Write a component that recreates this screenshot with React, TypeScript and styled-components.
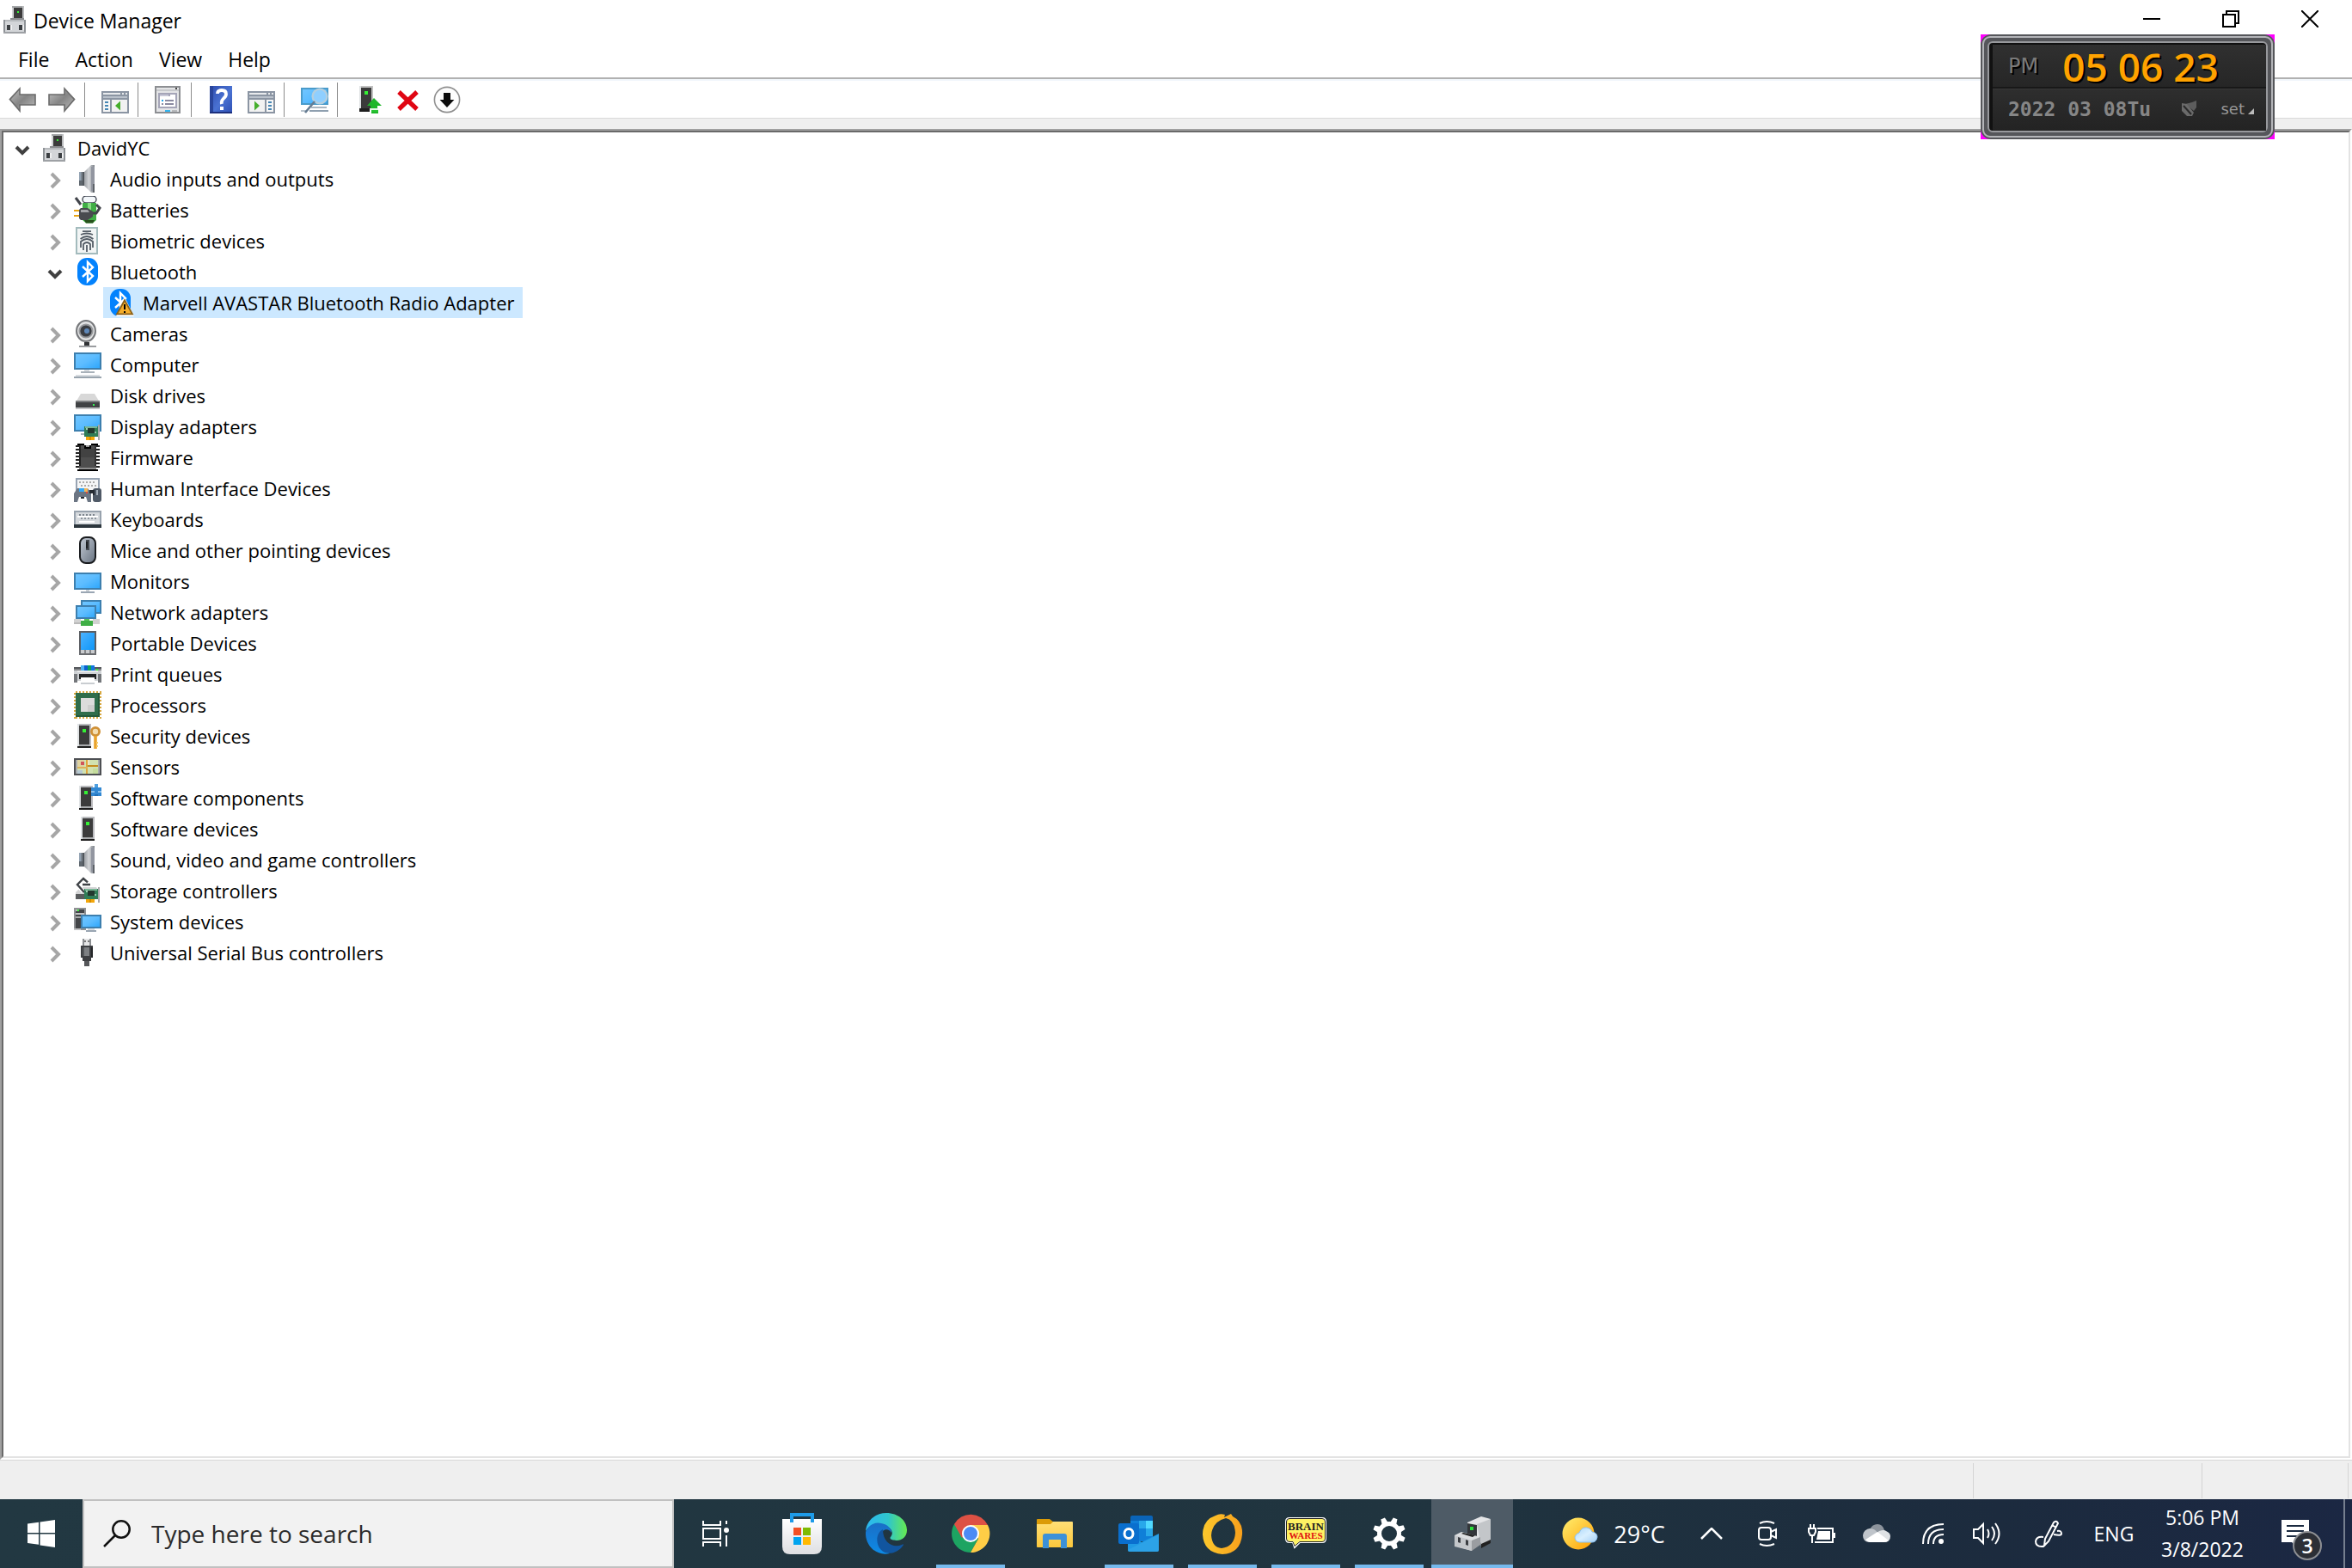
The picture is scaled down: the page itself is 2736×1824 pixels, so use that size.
import React from "react";
import styled, { createGlobalStyle } from "styled-components";

const GlobalStyle = createGlobalStyle`
  * { box-sizing: border-box; }
  body { margin: 0; background: #fff; }
  body, button, input { font-family: "Open Sans", "Noto Sans", sans-serif; }
  button { border: 0; padding: 0; background: none; color: inherit; }
`;

const Screen = styled.div`
  display: flex;
  flex-direction: column;
  min-height: 100vh;
  color: #000;
  font-size: 22px;
`;

/* ---------- window chrome ---------- */

const TitleBar = styled.header`
  display: flex;
  align-items: center;
  height: 46px;
  padding: 0 3px 0 2px;
`;

const WindowTitle = styled.h1`
  flex: 1;
  margin: 0 0 0 5px;
  padding-top: 2px;
  font-size: 23px;
  font-weight: 400;
  line-height: 44px;
`;

const CaptionButton = styled.button`
  display: grid;
  place-items: center;
  width: 92px;
  height: 44px;
  align-self: flex-start;
`;

const MenuBar = styled.nav`
  display: flex;
  height: 46px;
  padding-left: 6px;
  border-bottom: 2px solid #b1b1b1;
`;

const MenuItem = styled.button`
  padding: 2px 15px 0;
  font-size: 23px;
  line-height: 42px;
`;

const ToolBar = styled.div`
  display: flex;
  align-items: center;
  height: 46px;
  padding: 0 3px;
  border-top: 2px solid #f1f6fb;
  border-bottom: 1px solid #dadada;
`;

const ToolButton = styled.button`
  display: grid;
  place-items: center;
  width: 46px;
  height: 40px;
`;

const ToolSeparator = styled.span`
  width: 1px;
  height: 40px;
  margin: 0 12px 0 3px;
  background: #8c8c8c;
`;

const Main = styled.main`
  display: flex;
  flex: 1;
  padding-top: 12px;
  background: #efefef;
`;

const TreePane = styled.div`
  flex: 1;
  border: 2px solid #a0a0a0;
  border-right-color: #fff;
  border-bottom-color: #fff;
`;

const TreeInner = styled.div`
  height: 100%;
  background: #fff;
  border: 2px solid #696969;
  border-right-color: #e3e3e3;
  border-bottom-color: #e3e3e3;
`;

const TreeList = styled.ul`
  margin: 0;
  padding: 0;
  list-style: none;
`;

const TreeRow = styled.li<{ $level: number }>`
  display: flex;
  align-items: center;
  height: 36px;
  padding-left: ${(p) => 4 + p.$level * 38}px;
`;

const Toggle = styled.button`
  display: grid;
  place-items: center;
  width: 36px;
  height: 36px;
`;

const RowLabel = styled.span<{ $selected?: boolean }>`
  display: flex;
  align-items: center;
  gap: 10px;
  height: 36px;
  padding: 0 10px 0 4px;
  white-space: nowrap;
  background: ${(p) => (p.$selected ? "#cce8ff" : "transparent")};
`;

const RowText = styled.span`
  line-height: 36px;
`;

const StatusBar = styled.footer`
  display: flex;
  justify-content: flex-end;
  height: 46px;
  padding: 3px 4px 1px 0;
  border-top: 1px solid #d7d7d7;
  background: #efefef;
`;

const StatusCell = styled.span<{ $width: number }>`
  width: ${(p) => p.$width}px;
  border-right: 1px solid #d4d4d4;
`;

/* ---------- task bar ---------- */

const TaskBar = styled.nav`
  display: flex;
  height: 80px;
  color: #fff;
  background: linear-gradient(90deg, #223842 0%, #20343f 60%, #1c2b3e 85%, #1b2743 100%);
`;

const StartButton = styled.button`
  display: grid;
  place-items: center;
  width: 96px;
`;

const SearchBox = styled.label`
  display: flex;
  align-items: center;
  gap: 24px;
  width: 688px;
  padding-left: 22px;
  border: 2px solid #c1c1c1;
  background: #f2f2f2;
`;

const SearchInput = styled.input`
  flex: 1;
  min-width: 0;
  padding: 0;
  border: 0;
  outline: 0;
  background: transparent;
  font-size: 28px;
  line-height: 40px;
  &::placeholder { color: #2b2b2b; opacity: 1; }
`;

const AppStrip = styled.div`
  display: flex;
  padding-left: 2px;
`;

const AppButton = styled.button<{ $wide?: boolean }>`
  display: flex;
  flex-direction: column;
  align-items: center;
  justify-content: space-between;
  width: ${(p) => (p.$wide ? 98 : 97)}px;
  height: 80px;
`;

const AppFace = styled.span<{ $active?: boolean }>`
  display: grid;
  place-items: center;
  width: 95px;
  height: 76px;
  padding-top: 4px;
  background: ${(p) => (p.$active ? "#4e5b66" : "transparent")};
`;

const RunningMark = styled.span<{ $active?: boolean }>`
  width: ${(p) => (p.$active ? 95 : 80)}px;
  height: 4px;
  background: #76b9ed;
`;

const Tray = styled.div`
  display: flex;
  align-items: center;
  margin-left: auto;
`;

const TrayButton = styled.button<{ $width: number }>`
  display: flex;
  align-items: center;
  justify-content: center;
  gap: 18px;
  width: ${(p) => p.$width}px;
  height: 80px;
  font-size: 23px;
`;

const Temperature = styled.span`
  font-size: 27px;
`;

const TrayClock = styled.button`
  width: 140px;
  font-size: 23px;
  line-height: 37px;
  text-align: center;
`;

const ClockLine = styled.span`
  display: block;
`;

const NoticeButton = styled.button`
  position: relative;
  display: grid;
  place-items: center;
  width: 76px;
  height: 80px;
  margin-right: 18px;
`;

const NoticeCount = styled.span`
  position: absolute;
  top: 37px;
  left: 35px;
  width: 34px;
  height: 34px;
  border: 2px solid #8d8f93;
  border-radius: 50%;
  background: #2c2f36;
  font-size: 23px;
  font-weight: 600;
  line-height: 30px;
  text-align: center;
`;

const ShowDesktop = styled.button`
  width: 10px;
  height: 80px;
  border-left: 2px solid #76808f;
`;

/* ---------- floating clock ---------- */

const ClockWidget = styled.aside`
  position: fixed;
  top: 40px;
  right: 90px;
  width: 342px;
  height: 122px;
  background: #f0f;
`;

const ClockFrame = styled.div`
  height: 100%;
  padding: 2px;
  border-radius: 12px;
  background: #55565a;
`;

const ClockRim = styled.div`
  height: 100%;
  border: 2px solid #b4b5b9;
  border-radius: 9px;
  padding: 4px;
`;

const ClockFace = styled.div`
  display: flex;
  flex-direction: column;
  height: 100%;
  padding: 2px 0 0 4px;
  border: 2px solid #98999d;
  border-radius: 6px;
  background: #111;
`;

const ClockTime = styled.div`
  display: flex;
  align-items: center;
  flex: 1;
  gap: 28px;
  padding: 2px 18px 0;
  border-bottom: 2px solid #181818;
  background: linear-gradient(#303030, #262626);
`;

const Meridiem = styled.span`
  color: #7a7a7a;
  font: 400 24px/30px "DejaVu Sans", sans-serif;
  text-shadow: 2px 2px 0 #000;
`;

const Digits = styled.span`
  color: #ffa200;
  font-size: 46px;
  font-weight: 600;
  line-height: 46px;
  white-space: pre;
  text-shadow: 2px 2px 0 #000;
`;

const ClockDate = styled.div`
  display: flex;
  align-items: center;
  flex: 1;
  padding: 0 14px 2px 18px;
  border-top: 1px solid #383838;
  color: #868686;
  background: linear-gradient(#2e2e2e, #232323);
  font: 700 23px/30px "DejaVu Sans Mono", monospace;
  white-space: pre;
`;

const SetButton = styled.button`
  display: flex;
  align-items: center;
  gap: 4px;
  margin-left: auto;
  color: #979797;
  font: 400 18px/24px "DejaVu Sans", sans-serif;
`;

const SetArrow = styled.svg`
  margin-top: 6px;
`;

const Satellite = styled.svg`
  margin-left: 34px;
`;

/* ---------- drawings ---------- */

/* Each cell is "x,y,w,h,colour" on a 16 unit grid. */
const Cells = ({ d }: { d: string }) => (
  <g shapeRendering="crispEdges">
    {d.trim().split(/\s+/).map((c, i) => {
      const [x, y, w, h, f] = c.split(",");
      return <rect key={i} x={x} y={y} width={w} height={h} fill={"#" + f} />;
    })}
  </g>
);

const Svg16 = ({ children }: { children: React.ReactNode }) => (
  <svg width="32" height="32" viewBox="0 0 16 16" fill="none" aria-hidden="true">{children}</svg>
);

const DefsHolder = styled.svg`
  position: absolute;
`;

const Defs = () => (
  <DefsHolder width="0" height="0" aria-hidden="true">
    <defs>
      <linearGradient id="sky" x1="0" y1="0" x2="1" y2="1">
        <stop offset="0" stopColor="#72c6ff" /><stop offset=".5" stopColor="#5cbcff" /><stop offset="1" stopColor="#2ba5fb" />
      </linearGradient>
      <linearGradient id="deepSky" x1="0" y1="0" x2="1" y2="1"><stop offset="0" stopColor="#4fb4ff" /><stop offset="1" stopColor="#0b95f8" /></linearGradient>
      <linearGradient id="cone"><stop offset="0" stopColor="#9b9fa4" /><stop offset=".45" stopColor="#d3d5d8" /><stop offset="1" stopColor="#7d8289" /></linearGradient>
      <linearGradient id="mouse" x1="0" y1="0" x2="1" y2="1"><stop offset="0" stopColor="#c5ccd6" /><stop offset="1" stopColor="#66717f" /></linearGradient>
      <linearGradient id="arrow" x1="0" y1="0" x2="1" y2="1"><stop offset="0" stopColor="#c2c2c2" /><stop offset=".5" stopColor="#858585" /><stop offset="1" stopColor="#bcbcbc" /></linearGradient>
      <linearGradient id="help" x1="0" y1="0" x2="1" y2="1"><stop offset="0" stopColor="#2d4cae" /><stop offset=".55" stopColor="#4a72d2" /><stop offset="1" stopColor="#2d4fb4" /></linearGradient>
      <linearGradient id="bag" x1="0" y1="0" x2="0" y2="1"><stop offset="0" stopColor="#fff" /><stop offset="1" stopColor="#dedfe2" /></linearGradient>
      <linearGradient id="edgeTop"><stop offset="0" stopColor="#2bb8f2" /><stop offset=".55" stopColor="#30c6cb" /><stop offset="1" stopColor="#66ea4f" /></linearGradient>
      <linearGradient id="edgeLow" x1="0" y1="0" x2="0" y2="1"><stop offset="0" stopColor="#1a6ec6" /><stop offset="1" stopColor="#0d8be6" /></linearGradient>
      <linearGradient id="folder" x1="0" y1="0" x2="0" y2="1"><stop offset="0" stopColor="#ffdf76" /><stop offset="1" stopColor="#fcc83c" /></linearGradient>
      <linearGradient id="ring" x1="0" y1="0" x2="1" y2="0"><stop offset="0" stopColor="#fcc82c" /><stop offset="1" stopColor="#f8a01c" /></linearGradient>
      <linearGradient id="sun" x1="0" y1="0" x2="1" y2="1"><stop offset="0" stopColor="#ffee70" /><stop offset=".5" stopColor="#ffc83a" /><stop offset="1" stopColor="#ff9a00" /></linearGradient>
      <linearGradient id="cloud" x1="0" y1="0" x2="1" y2="1"><stop offset="0" stopColor="#a9d7fb" /><stop offset=".5" stopColor="#d9effe" /><stop offset="1" stopColor="#a5d0f6" /></linearGradient>
    </defs>
  </DefsHolder>
);

const tower = (x: number, y: number) =>
  `${x - 1},${y},1,13,dfe2e4 ${x},${y},6,1,b9bbbe ${x},${y + 1},6,12,3c3c3c ${x + 6},${y},1,13,bcbcc0 ${x},${y + 12},6,1,a9abad ${x - 1},${y + 13},8,1,1f1f1f ${x + 2},${y + 3},2,2,35f135`;

const Board = () => (
  <>
    <path d="M5 7h8v6H5z" fill="#2f7d57" /><path d="M5.500 7.500h7" stroke="#79b595" />
    <Cells d="7,8,4,3,22382e 6,8,1,1,9fd0b4 11,10,1,1,8cc3a4 6,13,5,2,f3a70b 8,13,1,2,d48c00 13,6,1,9,a8a9ac" />
  </>
);

const BtMark = () => (
  <>
    <rect x="2" y="0" width="12" height="16" rx="5.500" fill="#0382fd" />
    <path d="M5 5l6 5.500-3 3V2.500l3 3L5 11" stroke="#fff" strokeWidth="1.200" />
  </>
);

const icons: Record<string, React.ReactNode> = {
  computerRoot: (
    <Cells d="6,0,1,7,d2d4d6 7,0,5,8,3b3b3b 6,0,6,1,a5a7a9 12,0,1,8,bcbec0 9,3,1,1,35f135 1,8,13,8,8f9397 2,9,11,6,d3d5d8 2,8,11,1,b7babd 1,15,13,1,9ea1a5 3,11,2,3,3b3f42 10,11,2,3,3b3f42 5,11,1,3,eff0f1 12,11,1,3,eff0f1 5,7,8,1,8a8c8f" />
  ),
  audio: (
    <>
      <path d="M12 0v16h-2L6 12V4L10 0z" fill="url(#cone)" />
      <Cells d="10,1,2,14,9296a0 11,11,1,5,5d6268 3,4,1,8,94a3b3 4,4,1,8,7b858f 3,9,2,3,5f676e 5,4,1,8,50565c" />
    </>
  ),
  battery: (
    <>
      <rect x="5" y="0" width="8" height="4" rx="2" fill="#f3f7fa" stroke="#444a55" strokeWidth=".7" />
      <path d="M5 4h8v10l-2 1.700H7L5 14z" fill="#3fae45" /><path d="M8 4h2v6H8z" fill="#86dd83" />
      <path d="M6 14h6l-1 1.700H7z" fill="#27511c" />
      <path d="M1 1l3 4M10 10h3l2-3-2-2" stroke="#41444a" strokeWidth="1.500" />
      <path d="M3 8l1-1h4l3 2v3l-3 2H4l-1-1z" fill="#484b4f" /><path d="M4 8h4l1 1.500H4z" fill="#a3a6a9" />
      <Cells d="0,8,3,1,e9a413 0,11,3,1,e9a413" />
    </>
  ),
  fingerprint: (
    <>
      <path d="M1.500.5h12v15h-12z" fill="#f2f5f5" stroke="#a3bbbd" />
      <path d="M5 2.600h5M4 4.500q3.500-1.500 7 0M3.800 7Q7.500 4 11.200 7M4 12V8.500Q7.500 5.500 11 8.500V12M5.500 13.500V10q2-2 4 0v3.500M7.500 10.500v4" stroke="#535c66" strokeWidth=".9" />
    </>
  ),
  bluetooth: <BtMark />,
  bluetoothWarn: (
    <>
      <BtMark />
      <path d="M10.500 4.800L16 16H5.500z" fill="#fff" />
      <path d="M10.500 6.600L15 14.700H6z" fill="#f4ad2b" stroke="#8a611a" strokeWidth=".9" />
      <Cells d="10,9,1,3,000 10,13,1,1,000" />
    </>
  ),
  camera: (
    <>
      <ellipse cx="7" cy="6.500" rx="5.500" ry="6" fill="#e1e2e3" stroke="#76787b" />
      <circle cx="7" cy="6.500" r="3.800" fill="#3a3d42" stroke="#96989b" /><circle cx="7.500" cy="6.500" r="1.500" fill="#5f88b8" />
      <Cells d="6,13,3,2,303235 3,15,10,1,9b9da0" />
    </>
  ),
  computer: (
    <>
      <path d="M.5 1.500h15v9H.5z" fill="url(#sky)" stroke="#3d7fae" />
      <Cells d="6,11,3,1,d6dade 4,12,8,1,a8b1b9 1,14,14,1,d8dce0 0,15,16,1,99a4ae" />
    </>
  ),
  disk: (
    <>
      <path d="M4 7h8l3 5H1z" fill="#d8d8d8" /><path d="M1 11h14v4H1z" fill="#404244" />
      <Cells d="11,13,1,1,35f155 1,15,14,1,c1c2c4 1,11,14,1,7b7d7f" />
    </>
  ),
  display: (
    <>
      <path d="M.5 1.500h15v9H.5z" fill="url(#sky)" stroke="#3d7fae" />
      <Cells d="4,12,3,1,a8b1b9" />
      <g transform="translate(1 1)"><Board /></g>
    </>
  ),
  firmware: (
    <Cells d="3,1,10,13,4e4e4e 2,0,4,1,000 10,0,4,1,000 6,1,4,2,000 7,1,2,1,999 3,1,1,12,222 12,1,1,12,333 2,15,12,1,000 3,14,10,1,8e8e8e 4,3,8,5,424242 1,1,2,1,222 1,3,2,1,222 1,5,2,1,222 1,7,2,1,222 1,9,2,1,222 1,11,2,1,222 1,13,2,1,222 13,1,2,1,222 13,3,2,1,222 13,5,2,1,222 13,7,2,1,222 13,9,2,1,222 13,11,2,1,222 13,13,2,1,222" />
  ),
  hid: (
    <>
      <Cells d="1,2,14,8,98a4b3 2,3,12,6,f4f5f6 3,4,1,1,aaa 5,4,1,1,aaa 7,4,1,1,aaa 9,4,1,1,aaa 11,4,1,1,aaa 4,6,1,1,aaa 6,6,1,1,aaa 8,6,1,1,aaa 10,6,1,1,aaa 12,6,1,1,aaa" />
      <path d="M0 16V11l2-3h6l2 3v5H8l-1-3H3l-1 3z" fill="#6b7583" />
      <rect x="11" y="8" width="5" height="8" rx="1.500" fill="#4f5966" />
      <Cells d="3,8,3,2,35a7f4 6,8,2,2,f1b65b 7,10,1,1,e04b3a 9,9,2,2,252a31 11,9,1,3,252a31 13,9,1,3,a7b0bb 4,13,2,1,252a31" />
    </>
  ),
  keyboard: (
    <Cells d="0,3,16,9,98a2ad 1,4,14,8,d5d9dd 3,5,1,1,7d858d 5,5,1,1,7d858d 7,5,1,1,7d858d 9,5,1,1,7d858d 11,5,1,1,7d858d 4,7,1,1,8d959d 6,7,1,1,8d959d 8,7,1,1,8d959d 10,7,1,1,8d959d 12,7,1,1,8d959d 2,6,12,1,fff 3,9,9,1,fff 0,11,16,2,2c363d" />
  ),
  mouse: (
    <>
      <rect x="3.500" y=".5" width="9" height="15" rx="3.500" fill="url(#mouse)" stroke="#191b1e" />
      <Cells d="7,2,2,6,454a51 7,3,1,4,1d1f22" />
    </>
  ),
  monitor: (
    <>
      <path d="M.5 3.500h15v9H.5z" fill="url(#sky)" stroke="#3d7fae" />
      <Cells d="7,13,2,1,cdd2d7 4,14,8,1,9aa6b3" />
    </>
  ),
  network: (
    <>
      <path d="M4.500 1.500h11v7h-11z" fill="url(#sky)" stroke="#3d7fae" /><path d="M1.500 4.500h11v7h-11z" fill="url(#sky)" stroke="#3d7fae" />
      <Cells d="0,12,4,3,d2d2d2 11,12,4,3,d2d2d2 4,13,7,3,3fae45 6,12,3,1,56c45a 0,14,4,1,b9b9b9" />
    </>
  ),
  portable: (
    <>
      <path d="M3.500 1.500h9v11h-9z" fill="url(#deepSky)" stroke="#5b5e63" />
      <Cells d="3,12,10,3,6a6c70 4,12,8,2,c9cbce 6,12,1,2,86888b 9,12,1,2,86888b" />
    </>
  ),
  printer: (
    <Cells d="0,4,16,1,55585c 4,3,2,3,4fb3f2 6,3,2,3,0c5fd0 8,3,2,3,0fa35a 10,3,2,3,1277e0 0,5,4,1,85888b 12,5,4,1,85888b 13,5,1,1,35f135 0,6,16,6,cfd2d5 0,8,2,5,74777b 14,8,2,5,74777b 3,8,10,3,222426 4,10,8,4,fff 4,13,8,1,c9cdd1 2,6,12,1,e9ebec" />
  ),
  processor: (
    <>
      <Cells d="1,1,14,14,2f6d4b" />
      <path d="M.500 1v15M15.500 1v15M1 .5h15M1 15.500h15" stroke="#d7a840" strokeDasharray="1 1" />
      <Cells d="4,4,8,8,dcdcdc 8,8,4,4,cecece 14,1,1,14,245a3c 1,14,14,1,245a3c" />
    </>
  ),
  security: (
    <>
      <Cells d={tower(3, 1)} />
      <circle cx="12.500" cy="5.500" r="2.300" fill="#f3ddb0" stroke="#cf9036" strokeWidth="1.400" />
      <path d="M12.500 8v7.500" stroke="#e9a32e" strokeWidth="1.800" /><path d="M13.500 11.500v1M13.500 13.500v1" stroke="#f8cd69" />
    </>
  ),
  sensor: (
    <Cells d="0,3,16,10,4d4f53 1,4,14,8,a8abae 2,4,12,8,d1e2b0 2,4,4,4,dfd3a1 7,4,1,8,dfa63d 2,8,6,1,dcb25a 8,7,6,1,c58c1d 4,5,2,2,d2545a 2,10,3,2,b6c9d3 8,4,1,3,eee3bf 11,9,3,3,c4dc9c" />
  ),
  component: <Cells d={`${tower(4, 1)} 12,0,2,1,4f9fdf 10,2,6,5,3288d2 12,1,2,1,4f9fdf 10,4,2,1,8cc1ec 14,4,2,1,8cc1ec 12,6,2,1,226fb5`} />,
  software: <Cells d={tower(5, 1)} />,
  storage: (
    <>
      <path d="M1 9l3-3h9l2 3v3H1z" fill="#d3d4d5" /><path d="M1 10h5v3H1z" fill="#5a5c5e" />
      <path d="M9 4L5.500.8 2 4.500l3.500 4.300M5 4.500h5" stroke="#fff" strokeWidth="2.400" /><path d="M8 3.200L5.500 1 2 4.500 6 9M5 4.500h4.500" stroke="#3f4347" strokeWidth="1.200" />
      <g transform="translate(1 0)"><Board /></g>
    </>
  ),
  system: (
    <>
      <Cells d="0,0,7,13,8f9194 1,1,5,11,434548 1,1,1,1,b5b5b5 2,1,1,1,35f135 1,3,5,1,c1c2c4 1,5,5,1,a7a8aa 0,12,4,1,c1c2c4" />
      <path d="M4.500 4.500h11v7h-11z" fill="url(#sky)" stroke="#3d7fae" /><Cells d="8,12,4,1,d5d9dd 7,13,6,1,9aa6b3" />
    </>
  ),
  usb: (
    <Cells d="5,0,5,4,8c8f92 6,0,3,4,e5e6e7 6,1,1,1,777 8,1,1,1,777 4,4,7,7,3d3f42 5,5,4,5,7d8083 5,5,1,5,55585b 5,11,5,2,3d3f42 6,13,3,3,55575a 10,5,1,6,242628" />
  ),
  back: (
    <path d="M.7 7.800L6.500 1.500V5h9v6h-9v3.500z" fill="url(#arrow)" stroke="#6b6b6b" strokeWidth=".8" />
  ),
  forward: (
    <path d="M15.300 7.800L9.500 1.500V5h-9v6h9v3.500z" fill="url(#arrow)" stroke="#6b6b6b" strokeWidth=".8" />
  ),
  consoleTree: (
    <>
      <Cells d="0,3,16,13,8b95a3 1,4,10,1,e8eaed 12,4,1,1,e8eaed 14,4,1,1,e8eaed 1,6,14,1,b9c1cb 1,8,4,7,f7f7f7 6,8,9,7,f2f2f2 2,9,2,1,4686b4 2,11,2,1,4686b4 2,13,2,1,4686b4" />
      <path d="M11 8.800v5.400L8 11.500z" fill="#45ae2b" />
    </>
  ),
  properties: (
    <Cells d="0,0,15,16,8d8f93 1,1,13,14,e4e5e7 12,1,1,1,444 1,2,13,1,c8cacd 2,4,11,9,a5a5b8 3,5,9,7,fff 5,4,1,2,a5a5b8 8,4,1,2,a5a5b8 3,5,5,1,c8c8d8 4,8,1,1,20a5e8 4,10,1,1,8a8aa0 6,8,5,1,8a8aa0 6,10,5,1,8a8aa0 6,14,3,1,33b5ef 10,14,3,1,b8babd" />
  ),
  help: (
    <>
      <path d="M1 0h13v16H1z" fill="url(#help)" /><Cells d="1,0,2,16,29459b 1,15,13,1,1c2f7c" />
      <path d="M5.500 4.500Q5.500 2.500 8 2.500t2.500 2.200Q10.500 6 9 7.300T8 10.500" stroke="#fff" strokeWidth="1.900" /><path d="M7 12h2v2H7z" fill="#fff" />
    </>
  ),
  actionPane: (
    <>
      <Cells d="0,3,16,13,8b95a3 1,4,10,1,e8eaed 12,4,1,1,e8eaed 14,4,1,1,e8eaed 1,6,14,1,b9c1cb 1,8,9,7,f2f2f2 11,8,4,7,f7f7f7 12,9,2,1,4686b4 12,11,2,1,4686b4 12,13,2,1,4686b4" />
      <path d="M4 8.800v5.400l3-2.700z" fill="#45ae2b" />
    </>
  ),
  scan: (
    <>
      <path d="M.5 1.500h15v9H.5z" fill="url(#sky)" stroke="#4a9bca" />
      <Cells d="6,12,9,1,aab6c1 0,14,3,1,b9c4ce 5,14,11,1,8fa0b0" />
      <circle cx="11" cy="6" r="4.200" fill="#8fcfff" stroke="#b4cfdf" strokeWidth="1.200" />
      <path d="M8 9l-5.500 6.500" stroke="#667c92" strokeWidth="1.300" />
    </>
  ),
  update: (
    <>
      <Cells d="3,0,1,13,dfe2e4 4,0,6,1,c1c1c1 4,1,6,12,3b3b3b 10,0,1,10,c1c1c1 6,3,2,2,35f135 3,13,6,2,1f1f1f" />
      <path d="M11.500 7l4.500 4.500h-2.500V13h-4v-1.500H7.500z" fill="#1fb62a" /><Cells d="9,13,5,1,e5f6e6 10,14,4,1,28c433 10,15,4,1,1fb62a" />
    </>
  ),
  uninstall: <path d="M3 3.500l10.500 10M13.500 3.500L3 13.500" stroke="#e00613" strokeWidth="2.600" />,
  disable: (
    <>
      <circle cx="8" cy="8" r="7.300" fill="#fdfdfd" stroke="#8f8f8f" strokeWidth=".8" />
      <path d="M6 4h4v4h2.200L8 12.500 3.800 8H6z" fill="#0c0c0c" />
    </>
  ),
};

const Icon = ({ name }: { name: string }) => <Svg16>{icons[name]}</Svg16>;

const Chevron = ({ open }: { open: boolean }) => (
  <svg width="24" height="24" viewBox="0 0 24 24" fill="none" aria-hidden="true">
    <path d={open ? "M5 11l7 7 7-7" : "M8 6l8 8-8 8"} stroke={open ? "#404040" : "#a6a6a6"} strokeWidth="4" />
  </svg>
);

/* ---------- data ---------- */

type Node = { icon: string; label: string; level: number; state?: "open" | "leaf" };

const nodes: Node[] = [
  { icon: "computerRoot", label: "DavidYC", level: 0, state: "open" },
  { icon: "audio", label: "Audio inputs and outputs", level: 1 },
  { icon: "battery", label: "Batteries", level: 1 },
  { icon: "fingerprint", label: "Biometric devices", level: 1 },
  { icon: "bluetooth", label: "Bluetooth", level: 1, state: "open" },
  { icon: "bluetoothWarn", label: "Marvell AVASTAR Bluetooth Radio Adapter", level: 2, state: "leaf" },
  { icon: "camera", label: "Cameras", level: 1 },
  { icon: "computer", label: "Computer", level: 1 },
  { icon: "disk", label: "Disk drives", level: 1 },
  { icon: "display", label: "Display adapters", level: 1 },
  { icon: "firmware", label: "Firmware", level: 1 },
  { icon: "hid", label: "Human Interface Devices", level: 1 },
  { icon: "keyboard", label: "Keyboards", level: 1 },
  { icon: "mouse", label: "Mice and other pointing devices", level: 1 },
  { icon: "monitor", label: "Monitors", level: 1 },
  { icon: "network", label: "Network adapters", level: 1 },
  { icon: "portable", label: "Portable Devices", level: 1 },
  { icon: "printer", label: "Print queues", level: 1 },
  { icon: "processor", label: "Processors", level: 1 },
  { icon: "security", label: "Security devices", level: 1 },
  { icon: "sensor", label: "Sensors", level: 1 },
  { icon: "component", label: "Software components", level: 1 },
  { icon: "software", label: "Software devices", level: 1 },
  { icon: "audio", label: "Sound, video and game controllers", level: 1 },
  { icon: "storage", label: "Storage controllers", level: 1 },
  { icon: "system", label: "System devices", level: 1 },
  { icon: "usb", label: "Universal Serial Bus controllers", level: 1 },
];

const tools = [["back", "forward"], ["consoleTree"], ["properties"], ["help", "actionPane"], ["scan"], ["update", "uninstall", "disable"]];

type App = { name: string; running?: boolean; active?: boolean; wide?: boolean; art: React.ReactNode };

const GearTeeth = () => (
  <>
    {[22, 67, 112, 157, 202, 247, 292, 337].map((a) => (
      <path key={a} d="M20 10l1.500-8h5l1.500 8z" fill="#fff" transform={`rotate(${a} 24 24) translate(0 3)`} />
    ))}
  </>
);

const taskView: App = {
  name: "Task View",
  wide: true,
  art: (
    <g stroke="#fff" strokeWidth="2" transform="translate(8 9)">
      <path d="M1 0v5h20V0M1 30v-5h20v5M1 9h20v12H1zM28 0v4M28 17v13" /><circle cx="28" cy="11" r="2" fill="#fff" />
    </g>
  ),
};

const apps: App[] = [
  {
    name: "Microsoft Store", wide: true,
    art: (
      <g transform="translate(1 0)">
        <path d="M0 7h46v32q0 9-9 9H9q-9 0-9-9z" fill="url(#bag)" /><path d="M11 11V2h24v9" stroke="#1e9be8" strokeWidth="4" />
        <path d="M13 17h9v9h-9z" fill="#f25022" /><path d="M24 17h9v9h-9z" fill="#7fba00" /><path d="M13 28h9v9h-9z" fill="#00a4ef" /><path d="M24 28h9v9h-9z" fill="#ffb900" />
      </g>
    ),
  },
  {
    name: "Microsoft Edge", wide: true,
    art: (
      <>
        <path d="M0 21C1 9 11 0 24 0c14 0 24 9 24 20 0 8-6 12-12 12-5 0-9-2-7-4 4-5 1-10-5-13C15 11 6 12 0 21z" fill="url(#edgeTop)" />
        <path d="M0 22c3-8 11-12 18-10 7 1 12 6 12 11-2-4-7-5-10-2-5 6-2 20 8 26C13 51-1 38 0 22z" fill="url(#edgeLow)" />
        <path d="M20 19c-8 4-9 17-2 24 7 7 20 4 26-6 0-1-1-1-2 0-10 4-22-2-22-18z" fill="#11559f" />
      </>
    ),
  },
  {
    name: "Google Chrome", running: true, wide: true,
    art: (
      <g transform="translate(2 2)">
        <path d="M22 22L3 11a22 22 0 0 0 19 33l9-16z" fill="#1da462" />
        <path d="M22 12h20a22 22 0 0 1-20 32l9-16z" fill="#ffcd46" /><path d="M12 27L3 11a22 22 0 0 1 39 1H22z" fill="#dd5144" />
        <circle cx="22" cy="22" r="10" fill="#fff" /><circle cx="22" cy="22" r="8" fill="#4c8bf5" />
      </g>
    ),
  },
  {
    name: "File Explorer", wide: true,
    art: (
      <g transform="translate(3 7)">
        <path d="M0 1q0-1 1-1h14l5 4v6H0z" fill="#db9b07" /><path d="M0 6h16l3-3h22q1 0 1 1v28q0 1-1 1H1q-1 0-1-1z" fill="url(#folder)" />
        <path d="M7 34V20q0-3 3-3h22q3 0 3 3v14h-7V24H14v10z" fill="#3c91d8" />
      </g>
    ),
  },
  {
    name: "Outlook", running: true,
    art: (
      <g transform="translate(0 3)">
        <path d="M14 2q0-2 2-2h22q2 0 2 2v20H14z" fill="#0a64b8" /><path d="M14 6h26v24H14z" fill="#0f7fd8" /><path d="M24 6h8v9h-8z" fill="#28a8ea" /><path d="M32 6h8v9h-8z" fill="#50d9ff" /><path d="M32 15h8v9h-8z" fill="#28a8ea" />
        <path d="M11 22l16 9 20-10v19q0 2-2 2H13q-2 0-2-2z" fill="#1f9ae4" /><path d="M11 40l36-18v18q0 2-2 2H13q-2 0-2-2z" fill="#35a9ea" opacity=".6" />
        <rect x="0" y="9" width="24" height="24" rx="2" fill="#0a6fce" /><ellipse cx="12" cy="21" rx="5" ry="5.500" stroke="#fff" strokeWidth="3" />
      </g>
    ),
  },
  {
    name: "Norton", running: true,
    art: (
      <path fillRule="evenodd" d="M16 3Q21 0 27 2l-1 3 8-4 2 3q12 6 11 21Q45 47 24 48 2 46 1 25 1 8 16 3zM28 6Q12 10 11 26q1 14 12 15 15-2 16-18Q38 8 28 6z" fill="url(#ring)" />
    ),
  },
  {
    name: "Brainwares", running: true,
    art: (
      <g transform="translate(0 5)">
        <path d="M5 1h38q4 0 4 4v20q0 4-4 4H17l-6 6-2-6H5q-4 0-4-4V5q0-4 4-4z" fill="#fff263" stroke="#fff" strokeWidth="2" />
        <path d="M5 1.500h38q3.500 0 3.500 3.500v20q0 3.500-3.500 3.500H17l-6 5-2-5H5q-3.500 0-3.500-3.500V5q0-3.500 3.500-3.500z" stroke="#222" strokeWidth="1" />
        <text x="24" y="15" textAnchor="middle" fontFamily="Liberation Serif, serif" fontWeight="700" fontSize="13" fill="#222">BRAIN</text>
        <text x="24" y="25" textAnchor="middle" fontFamily="Liberation Serif, serif" fontWeight="700" fontSize="11" fill="#e01010">WARES</text>
      </g>
    ),
  },
  {
    name: "Settings", running: true,
    art: (<><GearTeeth /><circle cx="24" cy="24" r="11.500" stroke="#fff" strokeWidth="5" /></>),
  },
  {
    name: "Device Manager", running: true, active: true,
    art: (
      <g transform="translate(3 4)">
        <path d="M15 7L31 0l11 3-10 7v20l-17-8z" fill="#e4e5e7" /><path d="M26 9l16-6v25l-11 7z" fill="#c3c6c9" /><path d="M15 8l11 2v19l-11-4z" fill="#33363a" />
        <path d="M18 12h4v4h-4z" fill="#2be03b" /><path d="M31 32l11-5v4l-11 6z" fill="#222" />
        <path d="M0 22l8-4 22 6-10 16-20-6z" fill="#dcdee0" /><path d="M0 22l20 6v12L0 35z" fill="#c4c7ca" /><path d="M20 28l10-4v9l-10 7z" fill="#9a9da1" />
        <path d="M10 19l14 3-3 2-13-4z" fill="#222" /><path d="M4 24l3 1v6l-3-1zM13 27l3 1v6l-3-1z" fill="#3a3d41" />
      </g>
    ),
  },
];

const TaskButton = ({ app }: { app: App }) => (
  <AppButton $wide={app.wide} aria-label={app.name}>
    <AppFace $active={app.active}><svg width="48" height="48" viewBox="0 0 48 48" fill="none">{app.art}</svg></AppFace>
    {app.running && <RunningMark $active={app.active} />}
  </AppButton>
);

export default function App() {
  return (
    <Screen>
      <GlobalStyle />
      <Defs />
      <TitleBar>
        <Icon name="computerRoot" />
        <WindowTitle>Device Manager</WindowTitle>
        <CaptionButton aria-label="Minimize"><svg width="20" height="20"><path d="M0 10h20" stroke="#000" strokeWidth="2" /></svg></CaptionButton>
        <CaptionButton aria-label="Restore">
          <svg width="20" height="20" fill="none" stroke="#000" strokeWidth="2"><path d="M1 5h14v14H1zM5 5V1h14v14h-4" /></svg>
        </CaptionButton>
        <CaptionButton aria-label="Close"><svg width="20" height="20"><path d="M0 0l20 20M20 0L0 20" stroke="#000" strokeWidth="2" /></svg></CaptionButton>
      </TitleBar>
      <MenuBar>
        {["File", "Action", "View", "Help"].map((m) => <MenuItem key={m}>{m}</MenuItem>)}
      </MenuBar>
      <ToolBar>
        {tools.map((group, i) => (
          <React.Fragment key={i}>
            {i > 0 && <ToolSeparator />}
            {group.map((t) => <ToolButton key={t} aria-label={t}><Icon name={t} /></ToolButton>)}
          </React.Fragment>
        ))}
      </ToolBar>
      <Main>
        <TreePane>
          <TreeInner>
            <TreeList role="tree">
              {nodes.map((n) => (
                <TreeRow key={n.label} $level={n.level} role="treeitem" aria-selected={n.state === "leaf"}>
                  <Toggle aria-label={`Toggle ${n.label}`}>{n.state !== "leaf" && <Chevron open={n.state === "open"} />}</Toggle>
                  <RowLabel $selected={n.state === "leaf"}><Icon name={n.icon} /><RowText>{n.label}</RowText></RowLabel>
                </TreeRow>
              ))}
            </TreeList>
          </TreeInner>
        </TreePane>
      </Main>
      <StatusBar><StatusCell $width={1} /><StatusCell $width={266} /><StatusCell $width={170} /></StatusBar>
      <TaskBar>
        <StartButton aria-label="Start">
          <svg width="32" height="32" fill="#fff"><path d="M0 4.500L13 2.700V15H0zM14.500 2.500L32 0v15H14.500zM0 16.500h13v12.300L0 27zM14.500 16.500H32V32l-17.500-2.500z" /></svg>
        </StartButton>
        <SearchBox>
          <svg width="32" height="32" fill="none" stroke="#111" strokeWidth="2.500"><circle cx="21" cy="11" r="9.700" /><path d="M14 18L1 31" /></svg>
          <SearchInput type="text" placeholder="Type here to search" aria-label="Type here to search" />
        </SearchBox>
        <TaskButton app={taskView} />
        <AppStrip>
          {apps.map((a) => <TaskButton key={a.name} app={a} />)}
        </AppStrip>
        <Tray>
          <TrayButton $width={162} aria-label="Weather">
            <svg width="42" height="38" fill="none">
              <circle cx="19" cy="19" r="18.500" fill="url(#sun)" />
              <path d="M20 29q-5-1-5-6 1-4 5-5 3-7 9-6 5 1 6 5 6 1 6 6-1 6-6 6z" fill="url(#cloud)" stroke="#8cc2f2" />
            </svg>
            <Temperature>29°C</Temperature>
          </TrayButton>
          <TrayButton $width={66} aria-label="Show hidden icons"><svg width="26" height="14" fill="none" stroke="#fff" strokeWidth="2.500"><path d="M1 13L13 1l12 12" /></svg></TrayButton>
          <TrayButton $width={64} aria-label="Meet Now">
            <svg width="24" height="32" fill="none" stroke="#fff" strokeWidth="2"><rect x="2" y="9" width="14" height="14" rx="3" /><path d="M16 14l6-3v10l-6-3M3 4q8-4 17 0M3 28q8 4 17 0" /></svg>
          </TrayButton>
          <TrayButton $width={62} aria-label="Battery">
            <svg width="32" height="24" fill="none" stroke="#fff" strokeWidth="2"><path d="M11 6h18v16H8M31 11v6M5 14v9M3 1v5M7 1v5M1 6h8v4l-2 4H3l-2-4z" /><path d="M12 9h14v10H10z" fill="#fff" stroke="none" /></svg>
          </TrayButton>
          <TrayButton $width={66} aria-label="OneDrive">
            <svg width="32" height="22"><path d="M8 6Q11 0 17 0t8 7l-4 5z" fill="#8c939c" /><path d="M7 21Q0 20 0 13q1-7 8-8 6 0 9 5l8 5-6 6z" fill="#bfc4ca" /><path d="M15 11l4-3q6-2 8 0 5 2 5 6 0 6-6 7z" fill="#dfe2e5" /><path d="M3 18L17 9l13 10q-2 2-5 2H8q-3 0-5-3z" fill="#fff" /></svg>
          </TrayButton>
          <TrayButton $width={66} aria-label="Network">
            <svg width="26" height="26" fill="none" stroke="#fff" strokeWidth="2"><path d="M1 25Q1 2 25 2M7 25Q7 8 25 8M13 25Q13 14 25 14" /><circle cx="22" cy="22" r="3" fill="#fff" stroke="none" /></svg>
          </TrayButton>
          <TrayButton $width={58} aria-label="Volume">
            <svg width="32" height="28" fill="none" stroke="#fff" strokeWidth="2"><path d="M1 9h5l6-6v22l-6-6H1zM17 9q3 5 0 10M22 6q6 8 0 16M26 2q9 12 0 24" /></svg>
          </TrayButton>
          <TrayButton $width={86} aria-label="Windows Ink">
            <svg width="32" height="32" fill="none" stroke="#fff" strokeWidth="2"><path d="M11 30l1-8L22 3q3-3 5 1L16 25zM20 6l5 3M10 20q-8-1-9 5 0 6 7 6 4 0 5-4M22 17q9 2 9-1 0-4-5-3" /></svg>
          </TrayButton>
          <TrayButton $width={66}>ENG</TrayButton>
          <TrayClock><ClockLine>5:06 PM</ClockLine><ClockLine>3/8/2022</ClockLine></TrayClock>
          <NoticeButton aria-label="Notifications">
            <svg width="32" height="32"><path d="M0 0h32v26H18v6l-6-6H0z" fill="#fff" /><path d="M6 7h20M6 13h20M6 19h14" stroke="#1b2a40" strokeWidth="2" /></svg>
            <NoticeCount>3</NoticeCount>
          </NoticeButton>
          <ShowDesktop aria-label="Show desktop" />
        </Tray>
      </TaskBar>
      <ClockWidget>
        <ClockFrame>
          <ClockRim>
            <ClockFace>
              <ClockTime><Meridiem>PM</Meridiem><Digits>05 06 23</Digits></ClockTime>
              <ClockDate>
                2022 03 08Tu
                <Satellite width="20" height="20" fill="#6a6a6a"><path d="M2 3l6 1 8 10-2 4H8l-6-6z" /><path d="M6 4l8-2 5-2v8l-3 4z" opacity=".8" /><path d="M4 6l9 10" stroke="#2a2a2a" strokeWidth="2" /></Satellite>
                <SetButton>set<SetArrow width="7" height="7" viewBox="0 0 7 7"><path d="M7 0v7H0z" fill="#bbb" /></SetArrow></SetButton>
              </ClockDate>
            </ClockFace>
          </ClockRim>
        </ClockFrame>
      </ClockWidget>
    </Screen>
  );
}
